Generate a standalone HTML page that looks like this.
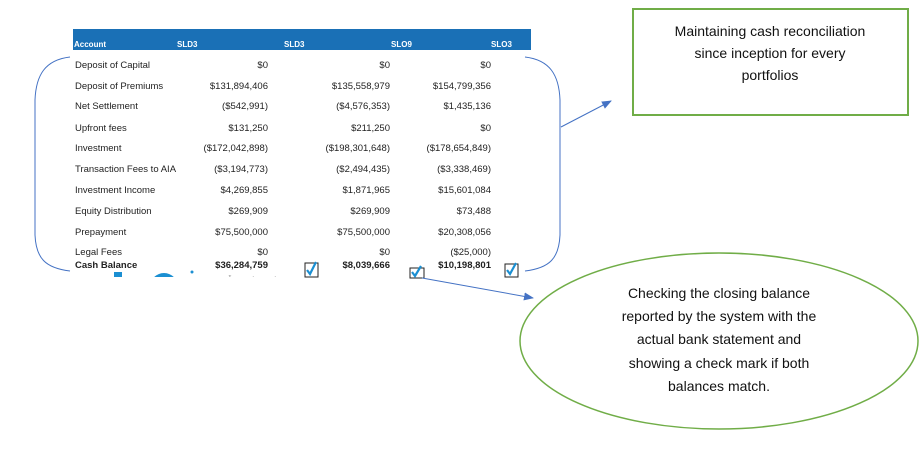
<!DOCTYPE html>
<html><head><meta charset="utf-8"><style>
html,body{margin:0;padding:0;background:#fff;width:923px;height:471px;overflow:hidden}
svg{display:block}
</style></head><body>
<svg width="923" height="471" xmlns="http://www.w3.org/2000/svg" font-family="Liberation Sans, sans-serif">
<defs>
<marker id="ah" markerWidth="10" markerHeight="8" refX="9" refY="4" orient="auto" markerUnits="userSpaceOnUse"><path d="M0,0 L10,4 L0,8 z" fill="#4472c4"/></marker>
<clipPath id="cl"><rect x="0" y="0" width="923" height="277"/></clipPath>
</defs>
<rect x="73" y="29" width="458" height="21" fill="#1a70b6"/>
<g fill="#fff" font-size="8" font-weight="bold">
<text x="74" y="47">Account</text>
<text x="177" y="47">SLD3</text>
<text x="284" y="47">SLD3</text>
<text x="391" y="47">SLO9</text>
<text x="491" y="47">SLO3</text>
</g>
<g font-size="9.5" fill="#222">
<text x="75" y="68">Deposit of Capital</text>
<text x="75" y="89">Deposit of Premiums</text>
<text x="75" y="109">Net Settlement</text>
<text x="75" y="131">Upfront fees</text>
<text x="75" y="151">Investment</text>
<text x="75" y="172">Transaction Fees to AIA</text>
<text x="75" y="193">Investment Income</text>
<text x="75" y="214">Equity Distribution</text>
<text x="75" y="235">Prepayment</text>
<text x="75" y="255">Legal Fees</text>
<text x="75" y="268" font-weight="bold">Cash Balance</text>
</g>
<g font-size="9.5" fill="#222" text-anchor="end">
<text x="268" y="68">$0</text><text x="390" y="68">$0</text><text x="491" y="68">$0</text>
<text x="268" y="89">$131,894,406</text><text x="390" y="89">$135,558,979</text><text x="491" y="89">$154,799,356</text>
<text x="268" y="109">($542,991)</text><text x="390" y="109">($4,576,353)</text><text x="491" y="109">$1,435,136</text>
<text x="268" y="131">$131,250</text><text x="390" y="131">$211,250</text><text x="491" y="131">$0</text>
<text x="268" y="151">($172,042,898)</text><text x="390" y="151">($198,301,648)</text><text x="491" y="151">($178,654,849)</text>
<text x="268" y="172">($3,194,773)</text><text x="390" y="172">($2,494,435)</text><text x="491" y="172">($3,338,469)</text>
<text x="268" y="193">$4,269,855</text><text x="390" y="193">$1,871,965</text><text x="491" y="193">$15,601,084</text>
<text x="268" y="214">$269,909</text><text x="390" y="214">$269,909</text><text x="491" y="214">$73,488</text>
<text x="268" y="235">$75,500,000</text><text x="390" y="235">$75,500,000</text><text x="491" y="235">$20,308,056</text>
<text x="268" y="255">$0</text><text x="390" y="255">$0</text><text x="491" y="255">($25,000)</text>
<g font-weight="bold"><text x="268" y="268">$36,284,759</text><text x="390" y="268">$8,039,666</text><text x="491" y="268">$10,198,801</text></g>
</g>
<g clip-path="url(#cl)">
<circle cx="164" cy="287" r="14" fill="#1b8fd2"/>
<rect x="114" y="272" width="8" height="8" fill="#1b8fd2"/>
<circle cx="192" cy="272" r="1.5" fill="#1b8fd2"/>
<text x="228" y="282" font-size="11" fill="#aaa" font-family="Liberation Serif, serif">Investment</text>
</g>
<g fill="none" stroke="#222" stroke-width="1">
<rect x="305" y="263" width="13" height="14"/><rect x="410" y="268" width="14" height="10"/><rect x="505" y="264" width="13" height="13"/>
</g>
<g fill="none" stroke="#1b8fd2" stroke-width="2.2">
<path d="M307,270 L310,274 L316,262"/><path d="M412,272 L415,276 L421,266"/><path d="M507,270 L510,274 L516,263"/>
</g>
<g fill="none" stroke="#4472c4" stroke-width="1">
<path d="M70,57 C45,60 36,75 35,100 L35,235 C36,258 45,268 70,271"/>
<path d="M525,57 C550,60 559,75 560,100 L560,235 C559,258 550,268 525,271"/>
<line x1="561" y1="127" x2="611" y2="101" marker-end="url(#ah)"/>
<line x1="422" y1="278" x2="533" y2="298" marker-end="url(#ah)"/>
</g>
<rect x="633" y="9" width="275" height="106" fill="#fff" stroke="#70ad47" stroke-width="2"/>
<g font-size="14" fill="#111" text-anchor="middle">
<text x="770" y="36">Maintaining cash reconciliation</text>
<text x="770" y="58">since inception for every</text>
<text x="770" y="80">portfolios</text>
</g>
<ellipse cx="719" cy="341" rx="199" ry="88" fill="#fff" stroke="#70ad47" stroke-width="1.5"/>
<g font-size="14" fill="#111" text-anchor="middle">
<text x="719" y="298">Checking the closing balance</text>
<text x="719" y="321">reported by the system with the</text>
<text x="719" y="344">actual bank statement and</text>
<text x="719" y="368">showing a check mark if both</text>
<text x="719" y="391">balances match.</text>
</g>
</svg>
</body></html>
